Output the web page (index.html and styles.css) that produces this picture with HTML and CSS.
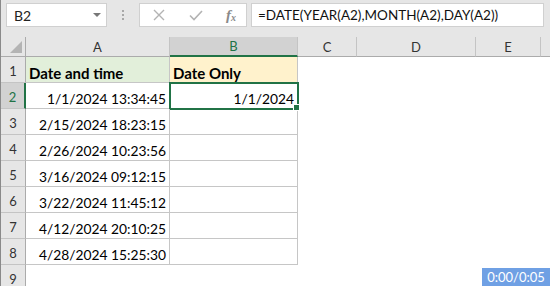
FILE: index.html
```html
<!DOCTYPE html>
<html>
<head>
<meta charset="utf-8">
<link rel="stylesheet" href="styles.css">
</head>
<body>
<div class="app">
  <div class="toolbar">
    <div class="namebox"><span class="name">B2</span><span class="caret"></span></div>
    <div class="grip"><i></i><i></i><i></i></div>
    <div class="btns">
      <svg class="ico" width="14" height="14" viewBox="0 0 14 14"><path d="M2 2 L12 12 M12 2 L2 12" stroke="#b3b3b3" stroke-width="1.4" fill="none"/></svg>
      <svg class="ico" width="16" height="14" viewBox="0 0 16 14"><path d="M2 7.5 L6 11.5 L14 3" stroke="#b3b3b3" stroke-width="1.6" fill="none"/></svg>
      <span class="fx">f<sub>x</sub></span>
    </div>
    <div class="formula">=DATE(YEAR(A2),MONTH(A2),DAY(A2))</div>
  </div>
  <div class="sheet">
    <div class="corner"><span class="tri"></span></div>
    <div class="colh">A</div>
    <div class="colh sel">B</div>
    <div class="colh">C</div>
    <div class="colh">D</div>
    <div class="colh">E</div>
    <div class="colh last"></div>

    <div class="rowh">1</div>
    <div class="cell hdr a">Date and time</div>
    <div class="cell hdr b">Date Only</div>
    <div class="blank"></div><div class="blank"></div><div class="blank"></div><div class="blank"></div>

    <div class="rowh sel">2</div>
    <div class="cell num">1/1/2024 13:34:45</div>
    <div class="cell num active">1/1/2024<span class="handle"></span></div>
    <div class="blank"></div><div class="blank"></div><div class="blank"></div><div class="blank"></div>

    <div class="rowh">3</div>
    <div class="cell num">2/15/2024 18:23:15</div>
    <div class="cell"></div>
    <div class="blank"></div><div class="blank"></div><div class="blank"></div><div class="blank"></div>

    <div class="rowh">4</div>
    <div class="cell num">2/26/2024 10:23:56</div>
    <div class="cell"></div>
    <div class="blank"></div><div class="blank"></div><div class="blank"></div><div class="blank"></div>

    <div class="rowh">5</div>
    <div class="cell num">3/16/2024 09:12:15</div>
    <div class="cell"></div>
    <div class="blank"></div><div class="blank"></div><div class="blank"></div><div class="blank"></div>

    <div class="rowh">6</div>
    <div class="cell num">3/22/2024 11:45:12</div>
    <div class="cell"></div>
    <div class="blank"></div><div class="blank"></div><div class="blank"></div><div class="blank"></div>

    <div class="rowh">7</div>
    <div class="cell num">4/12/2024 20:10:25</div>
    <div class="cell"></div>
    <div class="blank"></div><div class="blank"></div><div class="blank"></div><div class="blank"></div>

    <div class="rowh">8</div>
    <div class="cell num">4/28/2024 15:25:30</div>
    <div class="cell"></div>
    <div class="blank"></div><div class="blank"></div><div class="blank"></div><div class="blank"></div>

    <div class="rowh">9</div>
    <div class="blank"></div><div class="blank"></div>
    <div class="blank"></div><div class="blank"></div><div class="blank"></div><div class="blank"></div>
  </div>
  <div class="timer">0:00/0:05</div>
</div>
</body>
</html>
```
FILE: styles.css
```css
html, body {
  margin: 0;
  padding: 0;
  background: #ffffff;
  overflow: hidden;
}
.app {
  width: 550px;
  height: 286px;
  position: relative;
  font-family: "Lato", "Open Sans", sans-serif;
  border-left: 1px solid #8a8a8a;
  box-sizing: border-box;
  overflow: hidden;
}
.toolbar {
  height: 37px;
  background: #e6e6e6;
  display: flex;
  align-items: flex-start;
  padding-top: 3px;
  box-sizing: border-box;
}
.namebox {
  margin-left: 5px;
  width: 101px;
  height: 24px;
  background: #fff;
  border: 1px solid #d0d0d0;
  box-sizing: border-box;
  display: flex;
  align-items: center;
  justify-content: space-between;
  padding: 0 5px 0 7px;
  font-size: 14px;
  color: #222;
}
.caret {
  width: 0;
  height: 0;
  border-left: 4px solid transparent;
  border-right: 4px solid transparent;
  border-top: 4px solid #777;
}
.grip {
  width: 32px;
  height: 24px;
  display: flex;
  flex-direction: column;
  align-items: center;
  justify-content: center;
  gap: 2px;
}
.grip i {
  width: 2px;
  height: 2px;
  background: #a8a8a8;
}
.btns {
  width: 108px;
  height: 24px;
  background: #fff;
  border: 1px solid #d0d0d0;
  box-sizing: border-box;
  display: flex;
  align-items: center;
  justify-content: space-between;
  padding: 0 10px 0 12px;
  margin-right: 4px;
}
.fx {
  font-family: "Liberation Serif", serif;
  font-style: italic;
  font-weight: bold;
  color: #8a8a8a;
  font-size: 15px;
}
.fx sub {
  font-size: 10px;
  vertical-align: -1px;
}
.formula {
  width: 293px;
  height: 24px;
  background: #fff;
  border: 1px solid #d0d0d0;
  box-sizing: border-box;
  display: flex;
  align-items: center;
  padding-left: 6px;
  font-size: 13.5px;
  color: #111;
  white-space: nowrap;
}
.sheet {
  display: grid;
  grid-template-columns: 25px 144px 128px 59px 119px 65px 1fr;
  grid-template-rows: 20px repeat(9, 26px);
}
.corner {
  background: #e6e6e6;
  border-right: 1px solid #ababab;
  border-bottom: 1px solid #ababab;
  position: relative;
  box-sizing: border-box;
}
.tri {
  position: absolute;
  right: 3px;
  bottom: 3px;
  width: 0;
  height: 0;
  border-left: 12px solid transparent;
  border-bottom: 12px solid #b4b4b4;
}
.colh {
  background: #e6e6e6;
  border-right: 1px solid #c4c4c4;
  border-bottom: 1px solid #ababab;
  box-sizing: border-box;
  display: flex;
  align-items: center;
  justify-content: center;
  font-size: 13px;
  color: #333;
}
.colh.sel {
  background: #d2d2d2;
  border-bottom: 2px solid #217346;
  color: #217346;
}
.colh.last {
  border-right: none;
}
.rowh {
  background: #e6e6e6;
  border-right: 1px solid #ababab;
  border-bottom: 1px solid #c4c4c4;
  box-sizing: border-box;
  display: flex;
  align-items: center;
  justify-content: center;
  font-size: 13px;
  color: #333;
  padding-top: 2px;
}
.rowh.sel {
  background: #d2d2d2;
  border-right: 2px solid #217346;
  color: #217346;
}
.cell {
  border-right: 1px solid #c6c6c6;
  border-bottom: 1px solid #c6c6c6;
  box-sizing: border-box;
  display: flex;
  align-items: flex-end;
  padding: 0 3px 1px 3px;
  font-size: 13.8px;
  color: #000;
  white-space: nowrap;
  position: relative;
}
.cell.num {
  justify-content: flex-end;
}
.cell.hdr {
  font-weight: bold;
  font-size: 15px;
  padding-bottom: 0;
}
.cell.a {
  background: #e2efda;
}
.cell.b {
  background: #fff2cc;
}
.cell.active {
  outline: 2px solid #217346;
  outline-offset: -1px;
}
.handle {
  position: absolute;
  right: -3px;
  bottom: -3px;
  width: 5px;
  height: 5px;
  background: #217346;
  border: 1px solid #fff;
  z-index: 2;
}
.blank {
  background: #fff;
}
.timer {
  position: absolute;
  right: 0;
  bottom: 0;
  width: 68px;
  height: 18px;
  background: #6fa0e4;
  color: #fff;
  font-size: 13px;
  display: flex;
  align-items: center;
  justify-content: center;
}
```
